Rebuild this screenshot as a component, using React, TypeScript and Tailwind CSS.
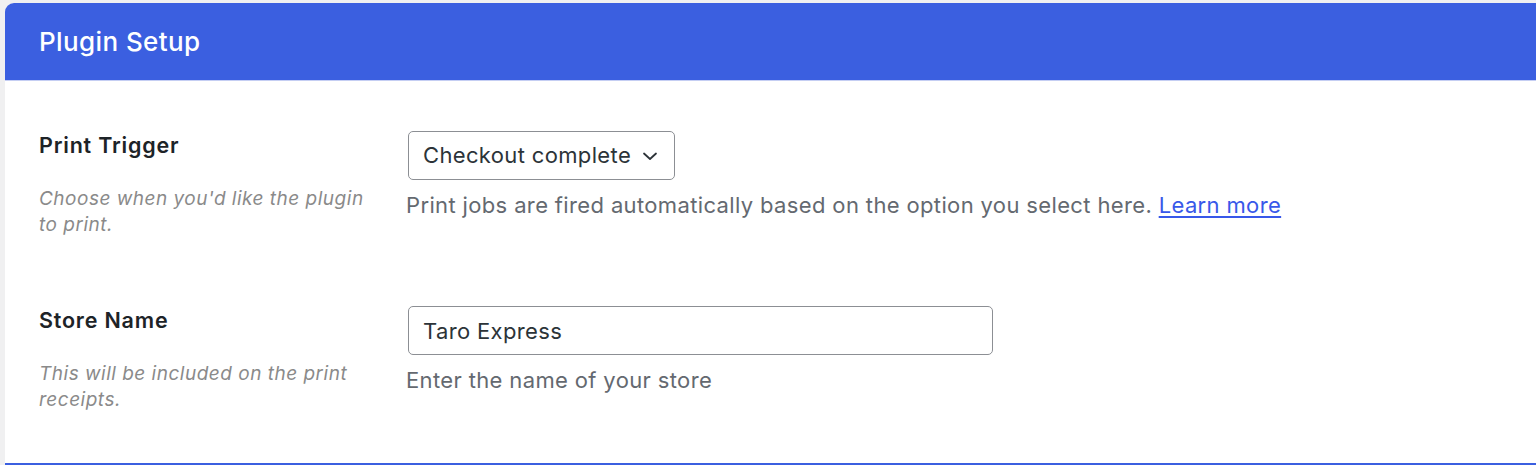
import React from "react";

export default function App() {
  return (
    <div
      className="min-h-screen bg-[#f0f0f1] pl-[5px] pt-[3px] overflow-hidden"
      style={{ fontFamily: 'Inter, "Noto Sans", "Liberation Sans", sans-serif' }}
    >
      <div className="bg-white rounded-tl-[9px] overflow-hidden h-[462px] flex flex-col">
        <div className="h-[78px] bg-[#3b5fe0] border-b border-[#c5cef3] flex items-center pl-[34px]">
          <h1 className="text-white text-[26px] font-medium tracking-[0.4px]">Plugin Setup</h1>
        </div>
        <div className="flex-1 flex flex-col pt-[50px] pl-[34px]">
          <div className="flex h-[175px]">
            <div className="w-[369px] shrink-0 pt-[2px]">
              <div className="text-[21.5px] font-semibold text-[#1d2327] leading-[24px] tracking-[0.8px]">Print Trigger</div>
              <div className="mt-[29px] text-[19px] italic text-[#8a8a8a] leading-[26px] tracking-[0.5px] w-[332px]">
                Choose when you'd like the plugin to print.
              </div>
            </div>
            <div className="flex flex-col items-start">
              <button className="h-[49px] rounded-[5px] border border-[#8c8f94] bg-white pl-[14px] pr-[14px] flex items-center gap-[9px] text-[22px] tracking-[0.35px] text-[#2c3338]">
                <span>Checkout complete</span>
                <svg width="20" height="20" viewBox="0 0 20 20" fill="none" stroke="#2c3338" strokeWidth="1.8" strokeLinecap="round" strokeLinejoin="round">
                  <path d="M4 7.5l6 5.5 6-5.5" />
                </svg>
              </button>
              <p className="mt-[10px] -ml-[2px] text-[22px] tracking-[0.36px] text-[#646970] leading-[30px]">
                Print jobs are fired automatically based on the option you select here.{" "}
                <a href="#" className="text-[#3858e9] underline underline-offset-[3px]">Learn more</a>
              </p>
            </div>
          </div>
          <div className="flex">
            <div className="w-[369px] shrink-0 pt-[2px]">
              <div className="text-[21.5px] font-semibold text-[#1d2327] leading-[24px] tracking-[0.8px]">Store Name</div>
              <div className="mt-[29px] text-[19px] italic text-[#8a8a8a] leading-[26px] tracking-[0.5px] w-[332px]">
                This will be included on the print receipts.
              </div>
            </div>
            <div className="flex flex-col items-start">
              <input
                defaultValue="Taro Express"
                className="h-[49px] w-[585px] rounded-[5px] border border-[#8c8f94] bg-white px-[14px] text-[22px] tracking-[0.35px] text-[#2c3338] outline-none"
              />
              <p className="mt-[10px] -ml-[2px] text-[22px] tracking-[0.36px] text-[#646970] leading-[30px]">
                Enter the name of your store
              </p>
            </div>
          </div>
        </div>
        <div className="h-[2px] bg-[#3b5fe0]" />
      </div>
    </div>
  );
}
